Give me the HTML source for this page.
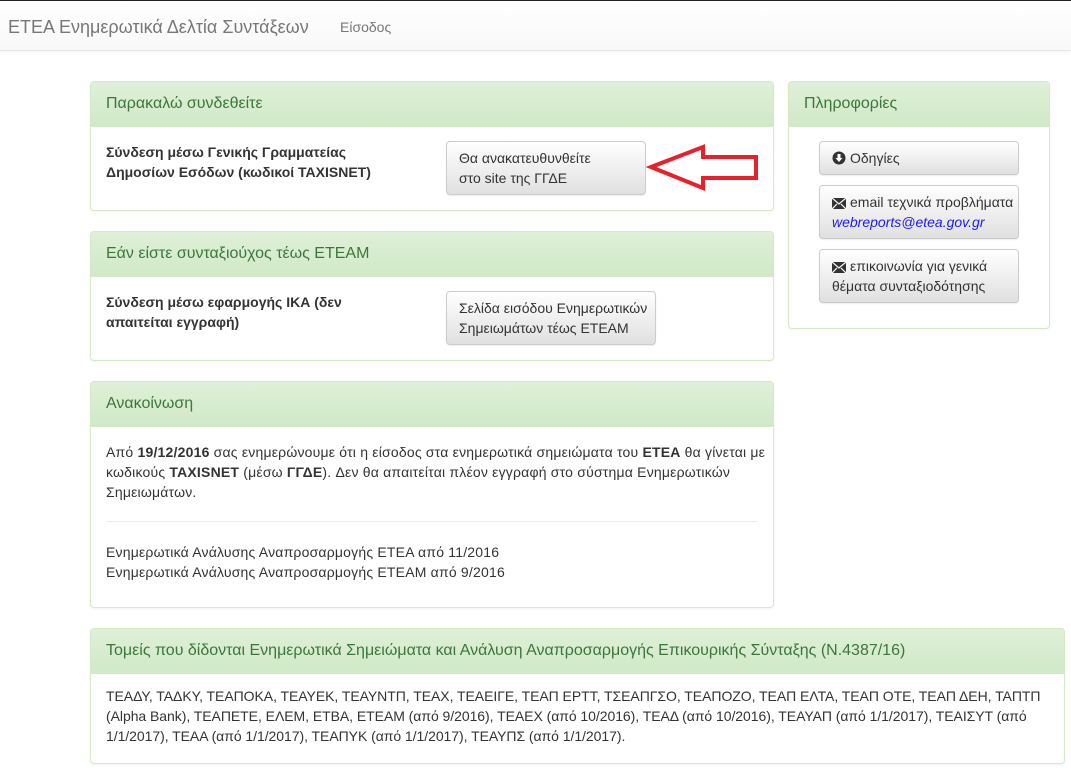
<!DOCTYPE html>
<html><head><meta charset="utf-8"><style>
*{box-sizing:border-box;margin:0;padding:0}
body{width:1071px;height:768px;overflow:hidden;background:#fff;font-family:"Liberation Sans",Arial,sans-serif;font-size:14px;color:#333;position:relative}
.nav{position:absolute;left:0;top:0;width:1071px;height:51px;background:linear-gradient(#fff,#f8f8f8);border-top:1px solid #222;border-bottom:1px solid #e7e7e7;box-shadow:0 1px 4px rgba(0,0,0,.06)}
.brand{position:absolute;left:8px;top:16px;font-size:18px;color:#777;white-space:nowrap}
.nl{position:absolute;left:340px;top:18px;font-size:14px;color:#777}
.p{position:absolute;border:1px solid #d6e9c6;border-radius:4px;background:#fff;box-shadow:0 1px 2px rgba(0,0,0,.05);overflow:hidden}
.h{background:linear-gradient(#dff0d8,#d0e9c6);color:#3c763d;font-size:16px;height:45px;padding:13px 15px 0;border-bottom:1px solid #d6e9c6;white-space:nowrap}
.b{position:absolute;white-space:nowrap;line-height:20px}
.btn{position:absolute;border:1px solid #ccc;border-radius:4px;background:linear-gradient(#fff,#e0e0e0);box-shadow:inset 0 1px 0 rgba(255,255,255,.15),0 1px 1px rgba(0,0,0,.075);padding:6px 12px;line-height:20px;white-space:nowrap;color:#333}
strong{font-weight:bold}
.ic{display:inline-block;vertical-align:-2px;margin-right:4px}
</style></head><body>
<div class="nav"><div class="brand">ETEA Ενημερωτικά Δελτία Συντάξεων</div><div class="nl">Είσοδος</div></div>

<div class="p" style="left:90px;top:81px;width:684px;height:130px">
<div class="h">Παρακαλώ συνδεθείτε</div>
<div class="b" style="left:15px;top:60px;font-weight:bold">Σύνδεση μέσω Γενικής Γραμματείας<br>Δημοσίων Εσόδων (κωδικοί TAXISNET)</div>
</div>
<div class="btn" style="left:446px;top:141px;width:200px;height:54px">Θα ανακατευθυνθείτε<br>στο site της ΓΓΔΕ</div>
<svg style="position:absolute;left:645px;top:142px" width="118" height="52"><polygon points="6,25 58,5 58,15 111,15 111,36 58,36 58,46" fill="none" stroke="#e8202a" stroke-width="4" stroke-linejoin="miter"/></svg>

<div class="p" style="left:90px;top:231px;width:684px;height:130px">
<div class="h">Εάν είστε συνταξιούχος τέως ΕΤΕΑΜ</div>
<div class="b" style="left:15px;top:60px;font-weight:bold">Σύνδεση μέσω εφαρμογής ΙΚΑ (δεν<br>απαιτείται εγγραφή)</div>
</div>
<div class="btn" style="left:446px;top:291px;width:210px;height:54px">Σελίδα εισόδου Ενημερωτικών<br>Σημειωμάτων τέως ΕΤΕΑΜ</div>

<div class="p" style="left:90px;top:381px;width:684px;height:227px">
<div class="h">Ανακοίνωση</div>
<div class="b" style="left:15px;top:60px;letter-spacing:0.2px">Από <strong>19/12/2016</strong> σας ενημερώνουμε ότι η είσοδος στα ενημερωτικά σημειώματα του <strong>ΕΤΕΑ</strong> θα γίνεται με<br>κωδικούς <strong>TAXISNET</strong> (μέσω <strong>ΓΓΔΕ</strong>). Δεν θα απαιτείται πλέον εγγραφή στο σύστημα Ενημερωτικών<br>Σημειωμάτων.</div>
<div style="position:absolute;left:15px;top:139px;width:652px;border-top:1px solid #eee"></div>
<div class="b" style="left:15px;top:160px;letter-spacing:0.2px">Ενημερωτικά Ανάλυσης Αναπροσαρμογής ΕΤΕΑ από 11/2016<br>Ενημερωτικά Ανάλυσης Αναπροσαρμογής ΕΤΕΑΜ από 9/2016</div>
</div>

<div class="p" style="left:788px;top:81px;width:262px;height:248px">
<div class="h">Πληροφορίες</div>
</div>
<div class="btn" style="left:819px;top:141px;width:200px;height:34px"><svg class="ic" width="14" height="14" viewBox="0 0 14 14"><circle cx="7" cy="7" r="6.5" fill="#333"/><path d="M5.5 3h3v4h2l-3.5 4-3.5-4h2z" fill="#fff"/></svg>Οδηγίες</div>
<div class="btn" style="left:819px;top:185px;width:200px;height:54px"><svg class="ic" width="14" height="11" viewBox="0 0 14 11"><rect width="14" height="11" fill="#333"/><path d="M0 0l7 6 7-6M0 11l5-5M14 11l-5-5" stroke="#fff" stroke-width="1.2" fill="none"/></svg>email τεχνικά προβλήματα<br><i style="color:#1a1aff">webreports@etea.gov.gr</i></div>
<div class="btn" style="left:819px;top:249px;width:200px;height:54px"><svg class="ic" width="14" height="11" viewBox="0 0 14 11"><rect width="14" height="11" fill="#333"/><path d="M0 0l7 6 7-6M0 11l5-5M14 11l-5-5" stroke="#fff" stroke-width="1.2" fill="none"/></svg>επικοινωνία για γενικά<br>θέματα συνταξιοδότησης</div>

<div class="p" style="left:90px;top:628px;width:975px;height:136px">
<div class="h" style="letter-spacing:0px">Τομείς που δίδονται Ενημερωτικά Σημειώματα και Ανάλυση Αναπροσαρμογής Επικουρικής Σύνταξης (Ν.4387/16)</div>
<div class="b" style="left:15px;top:57px;letter-spacing:-0.05px">ΤΕΑΔΥ, ΤΑΔΚΥ, ΤΕΑΠΟΚΑ, ΤΕΑΥΕΚ, ΤΕΑΥΝΤΠ, ΤΕΑΧ, ΤΕΑΕΙΓΕ, ΤΕΑΠ ΕΡΤΤ, ΤΣΕΑΠΓΣΟ, ΤΕΑΠΟΖΟ, ΤΕΑΠ ΕΛΤΑ, ΤΕΑΠ ΟΤΕ, ΤΕΑΠ ΔΕΗ, ΤΑΠΤΠ<br>(Alpha Bank), ΤΕΑΠΕΤΕ, ΕΛΕΜ, ΕΤΒΑ, ΕΤΕΑΜ (από 9/2016), ΤΕΑΕΧ (από 10/2016), ΤΕΑΔ (από 10/2016), ΤΕΑΥΑΠ (από 1/1/2017), ΤΕΑΙΣΥΤ (από<br>1/1/2017), ΤΕΑΑ (από 1/1/2017), ΤΕΑΠΥΚ (από 1/1/2017), ΤΕΑΥΠΣ (από 1/1/2017).</div>
</div>
</body></html>
